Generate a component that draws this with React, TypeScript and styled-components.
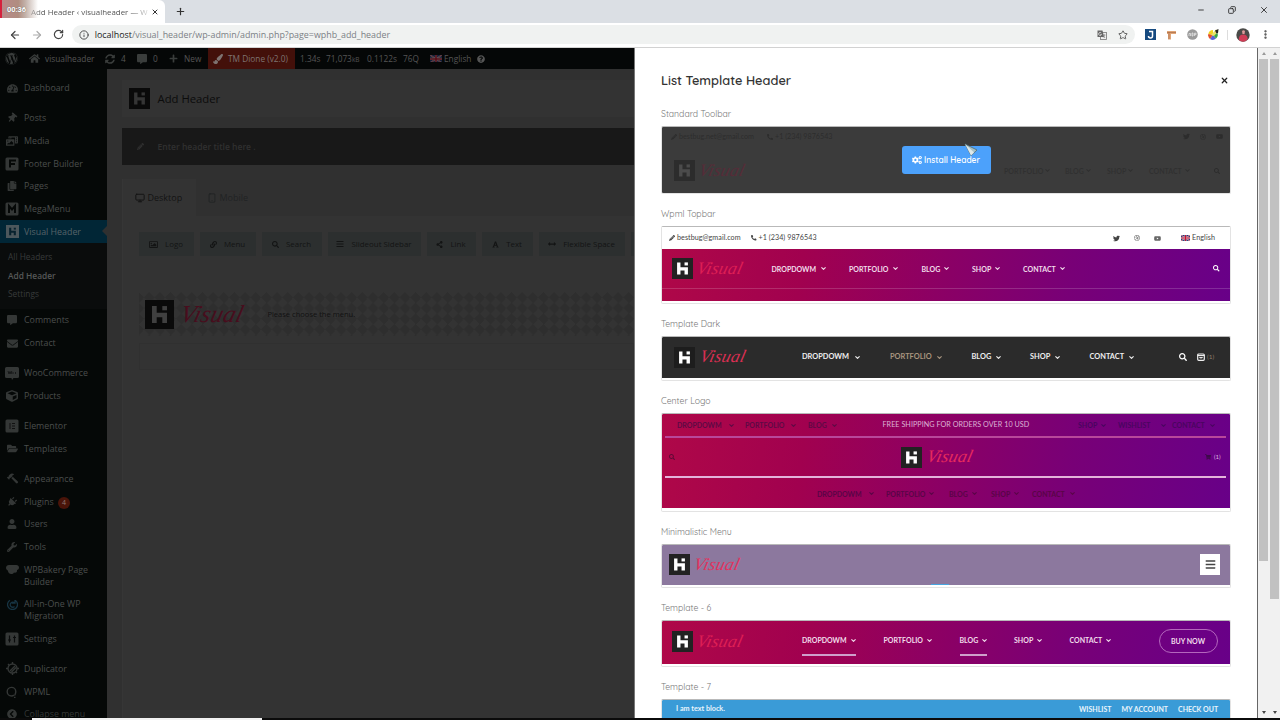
import React from "react";
import styled, { createGlobalStyle } from "styled-components";
import {
  FaWordpress, FaHome, FaSyncAlt, FaCommentAlt, FaPlus, FaPaintBrush, FaQuestionCircle, FaTachometerAlt,
  FaThumbtack, FaPhotoVideo, FaCopy, FaEnvelope, FaCube, FaFolderOpen, FaPlug, FaUser, FaWrench, FaCloud,
  FaSlidersH, FaChevronCircleLeft, FaPencilAlt, FaRegImage, FaLink, FaSearch, FaBars, FaShareAlt, FaFont,
  FaArrowsAltH, FaPhoneAlt, FaTwitter, FaDribbble, FaYoutube, FaCogs, FaShoppingCart, FaHammer,
} from "react-icons/fa";
import {
  ArrowLeft, ArrowRight, RotateCw, Info, X, Plus, Star, Minus, Copy, ChevronDown, Monitor, Smartphone, EllipsisVertical,
} from "lucide-react";

const Global = createGlobalStyle`
  * { box-sizing: border-box; }
  html, body { margin: 0; height: 720px; overflow: hidden; background: #fff; }
  svg { display: block; flex: none; }
`;

const ui = `"Open Sans", "Noto Sans", sans-serif`;
const lato = `Lato, "Liberation Sans", sans-serif`;
const ramp = "linear-gradient(97deg, #af0848 0%, #a1014f 25%, #8b0065 50%, #780077 72%, #680088 100%)";

const Screen = styled.div`
  width: 1280px; height: 720px; display: flex; flex-direction: column; overflow: hidden; position: relative;
  font-family: ${ui}; white-space: nowrap;
`;

/* ---------- browser chrome ---------- */
const TabStrip = styled.div`
  height: 23px; flex: none; display: flex; align-items: center; background: #dbdfe4; color: #333;
`;
const Tab = styled.div`
  width: 165px; height: 23px; background: #fff; border-radius: 0 6px 0 0; display: flex; align-items: center;
`;
const Timer = styled.div`
  width: 38px; height: 18px; margin-bottom: 5px; padding-left: 5px; border-left: 2px solid #d5203c;
  font: 700 7.4px/19px Roboto, sans-serif; color: #fff; text-shadow: 0 0 1px #555;
  background: linear-gradient(90deg, #b9898a 0%, #b08d80 45%, #c3b2aa 65%, #fff 100%);
`;
const TabTitle = styled.div`
  width: 117px; margin-left: -7px; font-size: 7.9px; line-height: 22px; color: #555;
  -webkit-mask-image: linear-gradient(90deg, #0006, #000 12px, #000 100px, #0003 117px);
`;
const TabClose = styled.div`margin-left: 3px;`;
const NewTab = styled.div`margin-left: 10px; flex: 1;`;
const WindowButtons = styled.div`display: flex; align-items: center; gap: 23px; margin: -4px 11px 0 0; color: #222;`;
const Toolbar = styled.div`
  height: 25px; flex: none; display: flex; align-items: center; background: #fff; border-bottom: 1px solid #d2d2d2;
  padding: 0 9px 1px; color: #444;
`;
const NavButtons = styled.div`display: flex; width: 63px; gap: 10px;`;
const Address = styled.div`
  width: 1067px; height: 19px; border-radius: 10px; background: #f0f2f1; display: flex; align-items: center; padding: 0 7px;
`;
const Url = styled.div`
  flex: 1; margin-left: 6px; font-size: 8.9px; color: #7b8085;
  b { font-weight: 400; color: #222; }
`;
const AddressIcons = styled.div`display: flex; align-items: center; gap: 11px; color: #555;`;
const Extensions = styled.div`display: flex; align-items: center; gap: 10px; margin-left: 10px;`;
const Divider = styled.i`width: 1px; height: 10px; background: #ddd; margin: 0 -2px;`;

/* ---------- page ---------- */
const Page = styled.div`height: 670px; flex: none; display: flex; overflow: hidden;`;
const Admin = styled.div`width: 635px; display: flex; flex-direction: column; background: #303030; border-right: 1px solid #777;`;
const AdminBar = styled.div`
  height: 21px; flex: none; background: #050707; color: #555; display: flex; align-items: center;
  font-size: 8.3px; padding-left: 5px;
`;
const BarItem = styled.div<{ w: number; gap?: number }>`
  width: ${(p) => p.w}px; height: 21px; display: flex; align-items: center; gap: ${(p) => p.gap ?? 4}px; flex: none;
  small { font-size: 6.5px; padding-top: 1px; margin-left: -4px; }
`;
const BarTheme = styled(BarItem)`background: #43100a; color: #7e7371; padding-left: 5px; margin-right: 5px;`;
const AdminBody = styled.div`flex: 1; display: flex; min-height: 0;`;
const Side = styled.div`width: 107px; background: #050807; padding-top: 8px; flex: none; overflow: hidden; color: #4b4e4d;`;
const SideItem = styled.div<{ lines?: number; sep?: boolean; active?: boolean; dim?: boolean }>`
  height: ${(p) => (p.lines === 2 ? 34.67 : 22.67)}px; margin-top: ${(p) => (p.sep ? 7.5 : 0)}px;
  padding: 5.33px 0 0 5px; display: flex; gap: 5px; font-size: 8.85px; line-height: 12px; position: relative;
  background: ${(p) => (p.active ? "#012636" : "none")}; color: ${(p) => (p.active ? "#566369" : p.dim ? "#333736" : "inherit")};
  &::after {
    content: ""; display: ${(p) => (p.active ? "block" : "none")}; position: absolute; right: 0; top: 6px;
    border: 5px solid transparent; border-right-color: #303030; border-left: 0;
  }
`;
const SideIcon = styled.div`width: 14px; height: 12px; display: flex; align-items: center; justify-content: center; color: #343736;`;
const Count = styled.span`
  display: inline-block; width: 12px; height: 12px; border-radius: 6px; background: #4a1409; color: #8c7772; margin-left: 2px;
  font-size: 7px; text-align: center;
`;
const Sub = styled.div`background: #0a0c0c; padding: 5px 0 5px 8px; font-size: 8.35px; line-height: 18.67px; color: #383b3b;`;
const SubItem = styled.div<{ on?: boolean }>`font-weight: ${(p) => (p.on ? 600 : 400)}; color: ${(p) => (p.on ? "#565858" : "inherit")};`;

const Work = styled.div`flex: 1; padding: 11px 0 0 14.5px; display: flex; flex-direction: column; overflow: hidden; min-width: 0;`;
const Heading = styled.div`
  height: 37px; background: #333; display: flex; align-items: center; gap: 8px; padding-left: 7px; font-size: 11.3px; color: #0c0c0c;
`;
const TitleField = styled.div`
  height: 37px; margin-top: 11px; background: #181818; display: flex; align-items: center; gap: 14px; padding-left: 15px;
  font-size: 8.55px; font-weight: 600; color: #303030;
`;
const Tabs = styled.div`height: 37px; margin-top: 14px; display: flex; font-size: 9px;`;
const DeviceTab = styled.div<{ on?: boolean }>`
  width: ${(p) => (p.on ? 74 : 70)}px; padding-left: ${(p) => (p.on ? 12 : 10)}px; display: flex; align-items: center; gap: 3px; flex: none;
  background: ${(p) => (p.on ? "#333" : "none")}; color: ${(p) => (p.on ? "#141414" : "#212324")}; border-left: 1px solid ${(p) => (p.on ? "#363636" : "transparent")};
`;
const Canvas = styled.div`flex: 1; background: #333; border-left: 1px solid #363636; padding: 16px 0 0 16px;`;
const Tools = styled.div`display: flex; gap: 6px;`;
const Tool = styled.div<{ w: number }>`
  width: ${(p) => p.w}px; height: 24px; flex: none; background: #2c2f2f; display: flex; align-items: center; justify-content: center;
  gap: 7px; font-size: 7.9px; color: #131414;
`;
const Checker = styled.div`
  height: 44px; margin-top: 36px; display: flex; align-items: center; padding: 0 0 0 6px; font-size: 7.55px; color: #111;
  background: repeating-conic-gradient(from 45deg, #2e2e2e 0 25%, #333 0 50%) 0 0 / 10.67px 10.67px;
`;
const Hint = styled.div`margin-left: 26px;`;
const EmptyRow = styled.div`height: 27px; margin-top: 7px; border: 1px solid #303030;`;

/* ---------- drawer ---------- */
const Drawer = styled.div`width: 622px; background: #fff; padding: 0 26px; overflow: hidden; font-family: ${lato};`;
const DrawerHead = styled.div`
  height: 46px; padding: 18px 2px 0 0; display: flex; justify-content: space-between; align-items: flex-start;
  font: 600 12.75px/28px Quicksand, "Open Sans", sans-serif; color: #333;
`;
const Close = styled.div`margin-top: 10px; color: #222;`;
const Label = styled.div`
  height: 12px; margin: 14px 0 6px; font: 400 8.7px/12px Quicksand, "Open Sans", sans-serif; color: #777;
`;
const Card = styled.div<{ h: number; bg: string; pad?: number }>`
  height: ${(p) => p.h}px; width: 570px; border: 1px solid #e3e3e3; border-top-color: #b9b9b9; border-radius: 2px; padding-bottom: ${(p) => p.pad ?? 2}px;
  background: ${(p) => p.bg}; background-clip: content-box; display: flex; flex-direction: column; position: relative;
`;
const Row = styled.div<{ h: number; bg?: string; pl?: number }>`
  height: ${(p) => p.h}px; flex: none; display: flex; align-items: center; padding-left: ${(p) => p.pl ?? 0}px;
  background: ${(p) => p.bg ?? "none"};
`;
const Cell = styled.div<{ w: number; up?: number }>`
  width: ${(p) => p.w}px; flex: none; display: flex; align-items: center; gap: 2px; padding-bottom: ${(p) => p.up ?? 0}px;
`;
const NavGroup = styled.div<{ up: number }>`display: flex; padding-bottom: ${(p) => p.up}px;`;
const NavItem = styled.div<{ w: number; c?: string; size: number }>`
  width: ${(p) => p.w}px; flex: none; display: flex; align-items: center; position: relative;
  font: 700 ${(p) => p.size}px/10px ${lato}; color: ${(p) => p.c ?? "#f1dcea"};
`;
const NavText = styled.span<{ w: number }>`width: ${(p) => p.w}px; flex: none;`;
const Underline = styled.i<{ w: number }>`
  position: absolute; left: 0; top: 19px; width: ${(p) => p.w}px; height: 2px; background: #cf9fcb;
`;
const Small = styled.span<{ c?: string; bold?: boolean; ls?: number; size?: number }>`
  font: ${(p) => (p.bold ? 700 : 400)} ${(p) => p.size ?? 7.2}px/10px ${lato}; color: ${(p) => p.c ?? "#444"}; flex: none;
  letter-spacing: ${(p) => p.ls ?? 0}px;
`;
const Rule = styled.i<{ c: string; thin?: boolean }>`
  height: ${(p) => (p.thin ? 1 : 2)}px; margin: ${(p) => (p.thin ? "0" : "0 4px 0 3px")}; background: ${(p) => p.c}; flex: none;
`;
const Brand = styled.div<{ gap: number }>`display: flex; align-items: center; gap: ${(p) => p.gap}px; flex: none;`;
const Script = styled.span<{ size: number; c: string; w: number }>`
  font: italic 400 ${(p) => p.size}px/1 "Liberation Serif", serif; color: ${(p) => p.c}; width: ${(p) => p.w}px;
  letter-spacing: 0.3px; transform: skewX(-14deg);
`;
const Dimmer = styled.div`
  position: absolute; inset: 0; background: rgba(60, 60, 60, 0.74); border-radius: 2px; display: flex; justify-content: center;
  padding-top: 19px;
`;
const Install = styled.div`
  width: 89px; height: 28px; border-radius: 3px; background: #4ca1fb; color: #fff; display: flex; align-items: center;
  justify-content: center; gap: 2px; font: 600 8.4px/28px Quicksand, "Open Sans", sans-serif;
`;
const Pointer = styled.div`position: absolute; left: 302px; top: 16px;`;
const MenuButton = styled.div`width: 20px; height: 21px; background: #fff; color: #444; display: flex; align-items: center; justify-content: center;`;
const Accent = styled.i`position: absolute; left: 269px; bottom: 2px; width: 18px; height: 1px; background: #48a5e0;`;
const Pill = styled.div`
  width: 59px; height: 24px; border: 1px solid #b467bd; border-radius: 12px; text-align: center; margin-bottom: 1px;
  font: 700 7px/22px ${lato}; color: #f1dcea;
`;

const Scrolls = styled.div`width: 23px; border-left: 1px solid #666; background: #f1f1f1; display: flex; gap: 1px; padding-left: 0.5px;`;
const Scroll = styled.div`width: 10px; display: flex; flex-direction: column; align-items: center; padding: 4px 0;`;
const Arrow = styled.i<{ down?: boolean }>`
  border: 2.5px solid transparent; height: 0; border-bottom: ${(p) => (p.down ? "0" : "3px solid #999")}; border-top: ${(p) => (p.down ? "3px solid #444" : "0")};
`;
const Thumb = styled.i<{ h: number }>`width: 9px; height: ${(p) => p.h}px; margin: 4px 0 auto; background: #c1c1c1;`;
const Footer = styled.div`height: 2px; flex: none; background: #0b0b0b; padding-left: 32px;`;
const Progress = styled.i`display: block; width: 230px; height: 2px; background: #f2f2f2;`;

const HMark = ({ s, bg = "#222", fg = "#fff" }: { s: number; bg?: string; fg?: string }) => (
  <svg width={s} height={s} viewBox="0 0 62 62">
    <rect width="62" height="62" fill={bg} />
    <path d="M15 13h10v14h22v22H37V37H25v12H15z" fill={fg} />
    <rect x="37" y="13" width="10" height="9" fill={fg} />
  </svg>
);

const Badge = ({ children }: { children: React.ReactNode }) => (
  <svg width="14" height="14" viewBox="0 0 14 14">
    <rect x=".5" y=".5" width="13" height="13" rx="1.5" fill="#343736" />
    {children}
  </svg>
);

const Flag = ({ w, o = 1 }: { w: number; o?: number }) => (
  <svg width={w} height={w * 0.66} viewBox="0 0 18 12" opacity={o}>
    <rect width="18" height="12" fill="#233a7a" />
    <path d="M0 0l18 12M18 0L0 12" stroke="#eee" strokeWidth="2" />
    <path d="M0 0l18 12M18 0L0 12" stroke="#c8102e" strokeWidth="1" />
    <path d="M9 0v12M0 6h18" stroke="#eee" strokeWidth="3.4" />
    <path d="M9 0v12M0 6h18" stroke="#c8102e" strokeWidth="2.4" />
  </svg>
);

const Visual = ({ s = 21, gap = 4, c = "#dd1f55", bg, fg }: { s?: number; gap?: number; c?: string; bg?: string; fg?: string }) => (
  <Brand gap={gap}>
    <HMark s={s} bg={bg} fg={fg} />
    <Script size={s * 0.84} c={c} w={s * 2.1}>Visual</Script>
  </Brand>
);

type Entry = [string, number, number, string?, number?];
const Menu = ({ items, size = 7, chevron = true, color, up = 0 }: { items: Entry[]; size?: number; chevron?: boolean; color?: string; up?: number }) => (
  <NavGroup up={up}>
    {items.map(([t, w, tw, c, u]) => (
      <NavItem key={t} w={w} size={size} c={c || color}>
        <NavText w={tw}>{t}</NavText>
        {chevron && <ChevronDown size={7} strokeWidth={3.8} />}
        {u ? <Underline w={u} /> : null}
      </NavItem>
    ))}
  </NavGroup>
);

const Item = ({ icon, children, ...rest }: any) => (
  <SideItem {...rest}>
    <SideIcon>{icon}</SideIcon>
    <div>{children}</div>
  </SideItem>
);

export default function App() {
  return (
    <Screen>
      <Global />
      <TabStrip>
        <Tab>
          <Timer>00:36</Timer>
          <TabTitle>Add Header ‹ visualheader — Wo</TabTitle>
          <TabClose><X size={8} strokeWidth={3} /></TabClose>
        </Tab>
        <NewTab><Plus size={11} strokeWidth={2.6} /></NewTab>
        <WindowButtons>
          <Minus size={8} strokeWidth={2.5} />
          <Copy size={8} strokeWidth={2.5} transform="scale(-1,1)" />
          <X size={10} strokeWidth={2} />
        </WindowButtons>
      </TabStrip>
      <Toolbar>
        <NavButtons>
          <ArrowLeft size={12} strokeWidth={2.4} />
          <ArrowRight size={12} strokeWidth={2.4} color="#aaa" />
          <RotateCw size={11} strokeWidth={2.6} />
        </NavButtons>
        <Address>
          <Info size={10} strokeWidth={2.2} />
          <Url><b>localhost</b>/visual_header/wp-admin/admin.php?page=wphb_add_header</Url>
          <AddressIcons>
            <svg width="10" height="10" viewBox="0 0 20 20">
              <rect x="7" y="5" width="12" height="14" fill="#eee" stroke="#777" strokeWidth="1.6" />
              <path d="M1 1h10l3 13H1z" fill="#666" />
              <path d="M8.500 6A3 3 0 1 0 9 9H6.500" stroke="#fff" fill="none" strokeWidth="1.300" />
              <path d="M12 10h5M14.500 9v1c0 3-1 4-2 5M13 12l3 4" stroke="#777" fill="none" strokeWidth="1.300" />
            </svg>
            <Star size={10} strokeWidth={2.2} />
          </AddressIcons>
        </Address>
        <Extensions>
          <svg width="11" height="11" viewBox="0 0 11 11">
            <rect width="11" height="11" fill="#164a80" />
            <path d="M4 2.500h3.500V7a2 2 0 0 1-4 0" stroke="#fff" strokeWidth="1.500" fill="none" />
          </svg>
          <svg width="11" height="10" viewBox="0 0 11 10">
            <path d="M1 1h9v3H5v5.500H2V4H1z" fill="#e0a578" />
            <path d="M3 2v7M1 2.500h9" stroke="#a86b45" strokeWidth=".7" />
          </svg>
          <svg width="11" height="11" viewBox="0 0 11 11">
            <circle cx="5.500" cy="5.500" r="5.300" fill="#9a9a9a" />
            <path d="M2 7V4.500h1.500V7M5 4v3h1V4zM7.500 7V4.200H9v1.500H7.500" stroke="#eee" strokeWidth=".7" fill="none" />
          </svg>
          <svg width="11" height="11" viewBox="0 0 11 11">
            <path d="M5 6V1A5 5 0 0 0 .3 5z" fill="#f4d21f" />
            <path d="M5 6L.3 5A5 5 0 0 0 2 10z" fill="#e2502a" />
            <path d="M5 6l-3 4a5 5 0 0 0 6-.5z" fill="#5a62d8" />
            <path d="M5 6l3 3.500A5 5 0 0 0 9.500 4z" fill="#3aa548" />
            <path d="M3 6l5-5.500 2.500 1.500L6 7z" fill="#e8e36a" />
            <path d="M7 1.500L10.500 0 10 4 8.500 4.500z" fill="#222" />
          </svg>
          <Divider />
          <svg width="14" height="14" viewBox="0 0 14 14">
            <circle cx="7" cy="7" r="6.700" fill="#4a4a48" />
            <path d="M3 12.300C2 8 5 6 8 6.500s4 3 3.500 5A6.700 6.700 0 0 1 3 12.300z" fill="#cf3d56" />
            <path d="M6 3q1.500-1.500 3 0l-.5 3h-2z" fill="#d99" />
          </svg>
          <EllipsisVertical size={11} strokeWidth={3} />
        </Extensions>
      </Toolbar>

      <Page>
        <Admin>
          <AdminBar>
            <BarItem w={24}><FaWordpress size={13} color="#3a3d3c" /></BarItem>
            <BarItem w={76} gap={5}><FaHome size={11} color="#3a3d3c" />visualheader</BarItem>
            <BarItem w={32} gap={6}><FaSyncAlt size={10} color="#3a3d3c" />4</BarItem>
            <BarItem w={32} gap={6}><FaCommentAlt size={10} color="#3a3d3c" /><span>0</span></BarItem>
            <BarItem w={39} gap={6}><FaPlus size={9} color="#3a3d3c" />New</BarItem>
            <BarTheme w={87} gap={5}><FaPaintBrush size={10} />TM Dione (v2.0)</BarTheme>
            <BarItem w={26}>1.34s</BarItem>
            <BarItem w={41}>71,073<small>kB</small></BarItem>
            <BarItem w={36}>0.1122s</BarItem>
            <BarItem w={27}>76Q</BarItem>
            <BarItem w={47} gap={2}><Flag w={12} o={0.42} />English</BarItem>
            <FaQuestionCircle size={8} />
          </AdminBar>
          <AdminBody>
            <Side>
              <Item icon={<FaTachometerAlt size={11} />}>Dashboard</Item>
              <Item sep icon={<FaThumbtack size={10} transform="rotate(40)" />}>Posts</Item>
              <Item icon={<FaPhotoVideo size={12} />}>Media</Item>
              <Item icon={<Badge><path d="M11 3.500H5v7M5 7h5" stroke="#050807" strokeWidth="2" fill="none" /></Badge>}>Footer Builder</Item>
              <Item icon={<FaCopy size={10} />}>Pages</Item>
              <Item icon={<Badge><path d="M4 11V4l3 3.500L10 4v7" stroke="#050807" strokeWidth="2" fill="none" /></Badge>}>MegaMenu</Item>
              <Item active icon={<HMark s={13} bg="#4c575c" fg="#08222e" />}>Visual Header</Item>
              <Sub>
                <SubItem>All Headers</SubItem>
                <SubItem on>Add Header</SubItem>
                <SubItem>Settings</SubItem>
              </Sub>
              <Item icon={<FaCommentAlt size={10} />}>Comments</Item>
              <Item icon={<FaEnvelope size={11} />}>Contact</Item>
              <Item sep icon={<svg width="14" height="13" viewBox="0 0 14 13"><path d="M1.500 0h11Q14 0 14 1.500v8Q14 11 12.500 11H8.500l-1.500 2-.5-2h-5Q0 11 0 9.500v-8Q0 0 1.500 0z" fill="#343736" /><path d="M3 4l1 3 1-2.500L6 7l.8-3M8 5v2M10.500 5v2" stroke="#171919" fill="none" /></svg>}>WooCommerce</Item>
              <Item icon={<FaCube size={12} />}>Products</Item>
              <Item sep icon={<Badge><path d="M5 4v6M7 4.500h3M7 7h3M7 9.500h3" stroke="#111" strokeWidth="1" /></Badge>}>Elementor</Item>
              <Item icon={<FaFolderOpen size={11} />}>Templates</Item>
              <Item sep icon={<FaHammer size={11} transform="scale(-1,1)" />}>Appearance</Item>
              <Item icon={<FaPlug size={10} transform="rotate(45)" />}>Plugins <Count>4</Count></Item>
              <Item icon={<FaUser size={10} />}>Users</Item>
              <Item icon={<FaWrench size={10} />}>Tools</Item>
              <Item lines={2} icon={<FaCloud size={13} transform="scale(1,-1)" />}>WPBakery Page<br />Builder</Item>
              <Item lines={2} icon={<svg width="11" height="11" viewBox="0 0 11 11" fill="none" stroke="#173443" strokeWidth="1.300"><path d="M3 1.200A5 5 0 1 0 8.500 1.500M7.500 4A2.500 2.500 0 1 0 7.500 7.500M8 1v3H5" /></svg>}>All-in-One WP<br />Migration</Item>
              <Item icon={<Badge><path d="M4.500 3.500v7M9.500 3.500v7M3 8h3M8 5.500h3" stroke="#0a0c0c" strokeWidth="1.200" /></Badge>}>Settings</Item>
              <Item sep icon={<svg width="13" height="13" viewBox="0 0 13 13" fill="none" stroke="#343736" strokeWidth="1.400"><circle cx="6.500" cy="6.500" r="4.500" /><path d="M4 9l5-5M5.500 10L10 5.500M6.500 0v2M0 6.500h2M11 6.500h2M6.500 11v2M2 2l1.200 1.200M11 11L9.800 9.800" /></svg>}>Duplicator</Item>
              <Item icon={<svg width="12" height="12" viewBox="0 0 12 12" fill="none" stroke="#343736" strokeWidth="1.400"><path d="M5.500 10A4.300 4.300 0 1 1 9.800 5.500c0 2-1 3-1 4M5.500 10c1 0 2-.5 2.500-1M8 11.500h1.500" /></svg>}>WPML</Item>
              <Item dim icon={<FaChevronCircleLeft size={10} />}>Collapse menu</Item>
            </Side>
            <Work>
              <Heading><HMark s={21} bg="#0a0a0a" fg="#353535" />Add Header</Heading>
              <TitleField><FaPencilAlt size={7} />Enter header title here .</TitleField>
              <Tabs>
                <DeviceTab on><Monitor size={10} strokeWidth={2.4} />Desktop</DeviceTab>
                <DeviceTab><Smartphone size={10} strokeWidth={2.2} />Mobile</DeviceTab>
              </Tabs>
              <Canvas>
                <Tools>
                  <Tool w={55}><FaRegImage size={9} />Logo</Tool>
                  <Tool w={56}><FaLink size={7} />Menu</Tool>
                  <Tool w={60}><FaSearch size={7} />Search</Tool>
                  <Tool w={93}><FaBars size={8} />Slideout Sidebar</Tool>
                  <Tool w={49}><FaShareAlt size={7} />Link</Tool>
                  <Tool w={51}><FaFont size={7} />Text</Tool>
                  <Tool w={86}><FaArrowsAltH size={8} />Flexible Space</Tool>
                  <Tool w={60} />
                </Tools>
                <Checker>
                  <Visual s={29} gap={7} c="#480d1d" bg="#0a0a0a" fg="#404040" />
                  <Hint>Please choose the menu.</Hint>
                </Checker>
                <EmptyRow />
              </Canvas>
            </Work>
          </AdminBody>
        </Admin>

        <Drawer>
          <DrawerHead>List Template Header<Close><X size={9} strokeWidth={3.2} /></Close></DrawerHead>

          <Label>Standard Toolbar</Label>
          <Card h={68} bg="#3b3b3b" pad={0}>
            <Row h={19} pl={9}>
              <Cell w={96}><FaPencilAlt size={6} /><Small c="#000">bestbug.net@gmail.com</Small></Cell>
              <Cell w={416}><FaPhoneAlt size={6} /><Small c="#000">+1 (234) 9876543</Small></Cell>
              <Cell w={17}><FaTwitter size={7} /></Cell>
              <Cell w={16}><FaDribbble size={6} /></Cell>
              <FaYoutube size={7} />
            </Row>
            <Row h={49} pl={12}>
              <Cell w={263}><Visual c="#a00030" bg="#000" fg="#777" /></Cell>
              <Menu color="#111" items={[["DROPDOWM", 67, 44], ["PORTFOLIO", 61, 40], ["BLOG", 42, 20], ["SHOP", 42, 20], ["CONTACT", 65, 35]]} />
              <FaSearch size={6} />
            </Row>
            <Dimmer>
              <Install><FaCogs size={10} />Install Header</Install>
              <Pointer>
                <svg width="15" height="14" viewBox="0 0 15 14">
                  <path d="M1 1l12 6-6 5.500z" fill="#a9c3c8" stroke="#4d6a72" strokeWidth=".8" />
                  <path d="M1 1l9 8.500-3 3z" fill="#dfe9ea" />
                </svg>
              </Pointer>
            </Dimmer>
          </Card>

          <Label>Wpml Topbar</Label>
          <Card h={78} bg={ramp}>
            <Row h={22} bg="#fff" pl={7}>
              <Cell w={82}><FaPencilAlt size={6} color="#444" /><Small size={7.15} ls={0.06}>bestbug@gmail.com</Small></Cell>
              <Cell w={362}><FaPhoneAlt size={5.5} color="#444" /><Small size={7.15} ls={0.06}>+1 (234) 9876543</Small></Cell>
              <Cell w={21}><FaTwitter size={7} color="#444" /></Cell>
              <Cell w={20}><FaDribbble size={6} color="#666" /></Cell>
              <Cell w={27}><FaYoutube size={7} color="#666" /></Cell>
              <Cell w={40}><Flag w={9} /><Small ls={0.1}>English</Small></Cell>
            </Row>
            <Row h={39} pl={10}>
              <Cell w={99.5}><Visual /></Cell>
              <Menu items={[["DROPDOWM", 77.5, 48], ["PORTFOLIO", 72.5, 43], ["BLOG", 50.5, 21], ["SHOP", 51, 22], ["CONTACT", 190, 36]]} />
              <FaSearch size={6.5} color="#fff" />
            </Row>
            <Rule thin c="#ffffff2b" />
          </Card>

          <Label>Template Dark</Label>
          <Card h={45} bg="#2b2b2b">
            <Row h={40} pl={12}>
              <Cell w={128}><Visual gap={5} c="#d92f52" bg="#1d1d1d" /></Cell>
              <Menu size={7.4} color="#eee" items={[["DROPDOWM", 88, 52], ["PORTFOLIO", 81.5, 45.5, "#a8957f"], ["BLOG", 58.5, 23], ["SHOP", 59.5, 23.5], ["CONTACT", 89.5, 38]]} />
              <Cell w={18}><FaSearch size={8} color="#fff" /></Cell>
              <Cell w={10}>
                <svg width="8" height="8" viewBox="0 0 8 8" fill="none" stroke="#eee" strokeWidth="1.200"><rect x=".7" y="1" width="6.600" height="6.300" rx="1" /><path d="M.7 2.500h6.600M2.500 4q1.500 1.800 3 0" /></svg>
              </Cell>
              <Small c="#8f7d6a" size={6.5}>(1)</Small>
            </Row>
          </Card>

          <Label>Center Logo</Label>
          <Card h={99} pad={3} bg={ramp}>
            <Row h={22} pl={15}>
              <Menu color="#5d0a45" items={[["DROPDOWM", 68, 51], ["PORTFOLIO", 63, 45], ["BLOG", 74.5, 23]]} />
              <Cell w={195.5}><Small size={7.2} c="#dcb3d4" ls={0.04}>FREE SHIPPING FOR ORDERS OVER 10 USD</Small></Cell>
              <Menu color="#4a0560" items={[["SHOP", 40, 22], ["WISHLIST", 54, 42], ["CONTACT", 40, 37]]} />
            </Row>
            <Rule c="#b8479a" />
            <Row h={38} pl={7}>
              <Cell w={232}><FaSearch size={6} color="#5d0a35" /></Cell>
              <Cell w={304}><Visual gap={5} c="#e52a5d" /></Cell>
              <Cell w={9}><FaShoppingCart size={6} color="#3d0a4a" /></Cell>
              <Small size={6} c="#dcb3e0">(1)</Small>
            </Row>
            <Rule c="#e3b3da" />
            <Row h={31} pl={155}>
              <Menu color="#590547" up={0} items={[["DROPDOWM", 69, 51], ["PORTFOLIO", 63, 42], ["BLOG", 42, 22], ["SHOP", 41, 22], ["CONTACT", 60, 37]]} />
            </Row>
          </Card>

          <Label>Minimalistic Menu</Label>
          <Card h={44} bg="#8c789e">
            <Row h={39} pl={7}>
              <Cell w={531}><Visual c="#e0335f" /></Cell>
              <MenuButton><FaBars size={11} /></MenuButton>
            </Row>
            <Accent />
          </Card>

          <Label>Template - 6</Label>
          <Card h={46.5} bg={ramp}>
            <Row h={41} pl={10}>
              <Cell w={130}><Visual /></Cell>
              <Menu up={3} items={[["DROPDOWM", 81.5, 48, "", 54], ["PORTFOLIO", 76, 42.500], ["BLOG", 54.5, 21, "", 27], ["SHOP", 55.5, 21.500], ["CONTACT", 89, 35.500]]} />
              <Pill>BUY NOW</Pill>
            </Row>
          </Card>

          <Label>Template - 7</Label>
          <Card h={46} bg="#3a9bd7">
            <Row h={19} pl={14}>
              <Cell w={403}><Small bold c="#e9f5fc">I am text block.</Small></Cell>
              <Menu chevron={false} color="#e9f5fc" items={[["WISHLIST", 42.5, 40], ["MY ACCOUNT", 56.5, 50], ["CHECK OUT", 45, 42]]} />
            </Row>
          </Card>
        </Drawer>
        <Scrolls>
          <Scroll><Arrow /><Thumb h={502} /><Arrow down /></Scroll>
          <Scroll><Arrow /><Thumb h={540} /><Arrow down /></Scroll>
        </Scrolls>
      </Page>
      <Footer><Progress /></Footer>
    </Screen>
  );
}
